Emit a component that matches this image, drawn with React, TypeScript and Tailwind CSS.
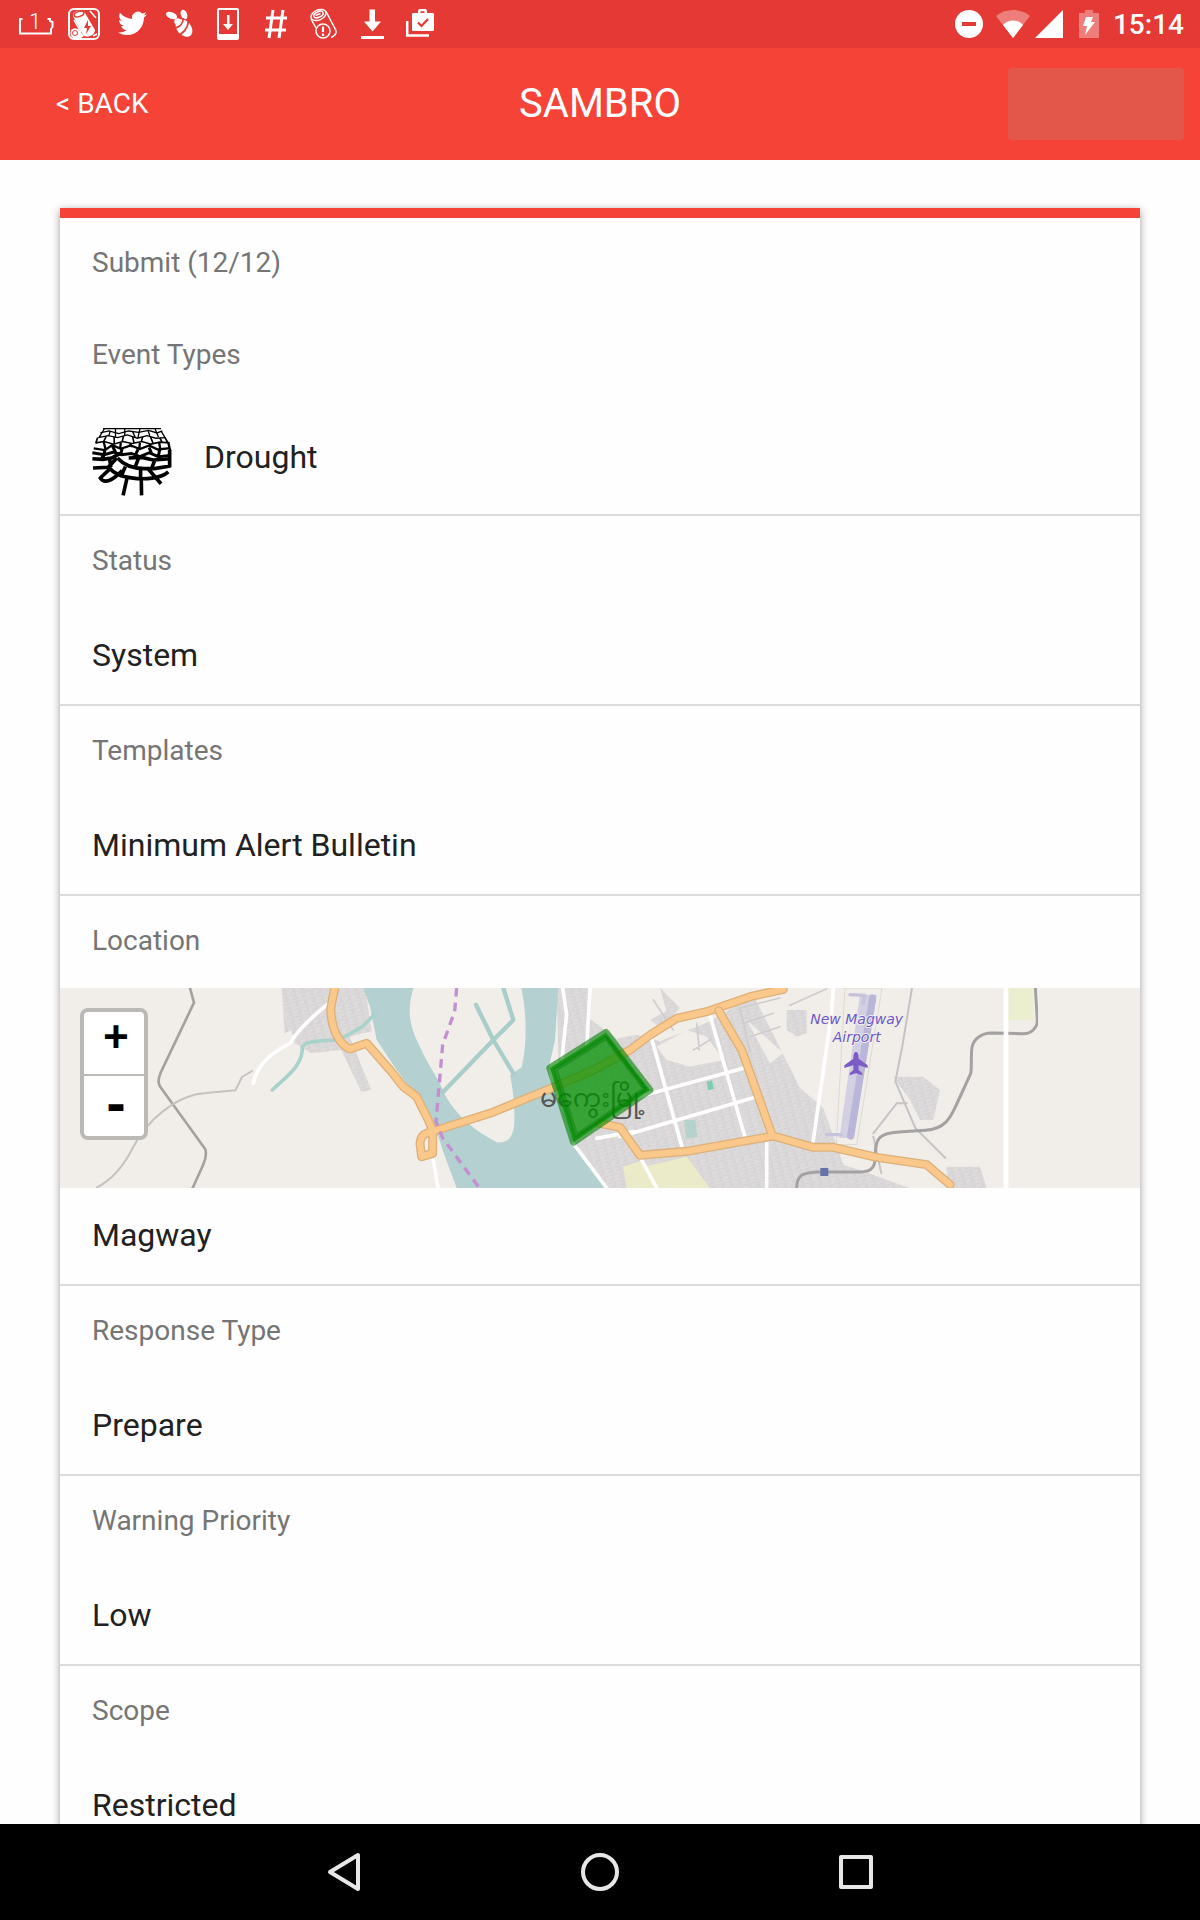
import type { ReactNode } from "react"

const fields = [
  { label: "Response Type", value: "Prepare" },
  { label: "Warning Priority", value: "Low" },
  { label: "Scope", value: "Restricted" },
]

function StatusIcon({ children }: { children: ReactNode }) {
  return (
    <svg viewBox="0 0 48 48" className="size-12 shrink-0" fill="none" aria-hidden="true">
      {children}
    </svg>
  )
}

function StatusBar() {
  return (
    <div className="flex h-12 shrink-0 items-center justify-between bg-[#e53935] pr-4 pl-3 text-white">
      <div className="flex">
        <StatusIcon>
          <path d="M10.500 19H8v14.500h31V29l1.500-2v-5L38 21v-2h-2.500" stroke="#fff" strokeWidth="2" />
          <text x="17" y="29" fontSize="22" fontWeight="300" fill="#fff" fontFamily="Roboto, sans-serif">1</text>
        </StatusIcon>
        <StatusIcon>
          <rect x="9" y="9" width="30" height="30" rx="5" stroke="#fff" strokeWidth="2" />
          <path d="M13 16c-1-5 9-7 12-3l10 17c0 5-8 9-12 5Z" fill="#fff" />
          <ellipse cx="19" cy="14" rx="5" ry="2.500" transform="rotate(-18 19 14)" stroke="#e53935" strokeWidth="1.500" />
          <path d="m28 20-4 8h3l-1 6 5-8h-3Z" fill="#e53935" />
          <path d="M11 30c2-2 6-2 8 0l5 6-3 2h-8c-2-1-3-4-2-8Z" fill="#fff" />
          <circle cx="15" cy="33" r="2.500" stroke="#e53935" />
          <path d="m14 20 7 12M30 11l6 7M33 36l4-2" stroke="#fff" strokeWidth="1.500" />
        </StatusIcon>
        <StatusIcon>
          <path
            transform="translate(10 9) scale(1.200)"
            fill="#fff"
            d="M23.953 4.570a10 10 0 0 1-2.825.775 4.958 4.958 0 0 0 2.163-2.723c-.951.555-2.005.959-3.127 1.184a4.920 4.920 0 0 0-8.384 4.482C7.690 8.095 4.067 6.130 1.640 3.162a4.822 4.822 0 0 0-.666 2.475c0 1.710.870 3.213 2.188 4.096a4.904 4.904 0 0 1-2.228-.616v.060a4.923 4.923 0 0 0 3.946 4.827 4.996 4.996 0 0 1-2.212.085 4.936 4.936 0 0 0 4.604 3.417 9.867 9.867 0 0 1-6.102 2.105c-.390 0-.779-.023-1.170-.067a13.995 13.995 0 0 0 7.557 2.209c9.053 0 13.998-7.496 13.998-13.985 0-.210 0-.420-.015-.630A9.935 9.935 0 0 0 24 4.590Z"
          />
        </StatusIcon>
        <StatusIcon>
          <g fill="#fff">
            <ellipse cx="15.500" cy="15.500" rx="5.800" ry="3.300" transform="rotate(22 15.500 15.500)" />
            <ellipse cx="28" cy="14.500" rx="3.200" ry="5" transform="rotate(-20 28 14.500)" />
            <circle cx="21.500" cy="21.500" r="3.200" />
            <ellipse cx="28" cy="28" rx="7" ry="10" transform="rotate(-42 28 28)" />
          </g>
          <path d="M17 28c6 0 10-4 10.500-10M21 36c6-2 11-8 11.500-15" stroke="#e53935" strokeWidth="1.800" />
        </StatusIcon>
        <StatusIcon>
          <rect x="14" y="9" width="20" height="30" rx="1" stroke="#fff" strokeWidth="2" />
          <path d="M14 34h20v5H14Z" fill="#fff" />
          <path d="M23 15h2.500v9H29l-5 6-5-6h4Z" fill="#fff" />
        </StatusIcon>
        <StatusIcon>
          <path d="m21 10-4 28M31 10l-4 28M14 18h21M13 30h21" stroke="#fff" strokeWidth="3" />
        </StatusIcon>
        <StatusIcon>
          <g stroke="#fff" strokeWidth="1.500">
            <ellipse cx="18.500" cy="15" rx="8" ry="5" transform="rotate(-24 18.500 15)" />
            <ellipse cx="18.500" cy="14.500" rx="5" ry="2.800" transform="rotate(-24 18.500 14.500)" />
            <path d="m15.500 15.500 5-2M11 19l5 9M26 11.500l10 19c1 3-2 6-5 7" />
            <circle cx="23" cy="31" r="7" />
          </g>
          <path d="M23 26.500v5.500M23 33.500V36" stroke="#fff" strokeWidth="2.200" />
        </StatusIcon>
        <StatusIcon>
          <path d="M21.500 9.500h5.500v12h6l-8.500 10-8.500-10h5.500ZM13 36h23v3H13Z" fill="#fff" />
        </StatusIcon>
        <StatusIcon>
          <path
            d="M17 13h5v-1.500c0-2 1-2.500 2-2.500h5c1 0 2 .5 2 2.500V13h5.500c1 0 1.500.5 1.500 1.500v15c0 1-.5 1.500-1.500 1.500h-19c-1 0-1.500-.5-1.500-1.500v-15c0-1 .5-1.500 1-1.500Zm7.500 0h4v-1.800h-4Z"
            fill="#fff"
            fillRule="evenodd"
          />
          <path d="m22 22.500 3.500 3.500 6.500-7" stroke="#e53935" strokeWidth="2.200" />
          <path d="M11.200 21v14.500H33" stroke="#fff" strokeWidth="2.500" />
        </StatusIcon>
      </div>
      <div className="flex items-center">
        <svg viewBox="0 0 28 28" className="mr-3 size-7" aria-hidden="true">
          <circle cx="14" cy="14" r="14" fill="#fff" />
          <path d="M7 12h14v4H7Z" fill="#e53935" />
        </svg>
        <svg viewBox="0 0 36 28" className="mr-1 h-7 w-9" fill="#fff" aria-hidden="true">
          <path d="M18 28 1 6c9-8 25-8 34 0Z" opacity=".35" />
          <path d="M18 28 8 15c5-6 15-6 20 0Z" />
        </svg>
        <svg viewBox="0 0 28 28" className="mr-4 size-7" fill="#fff" aria-hidden="true">
          <path d="M28 0v28H0Z" />
        </svg>
        <svg viewBox="0 0 20 28" className="mr-3.5 h-7 w-5" fill="#fff" aria-hidden="true">
          <path d="M6 0h8v3h6v25H0V3h6Z" opacity=".35" />
          <path d="M7 7h7l-2 5h4L6 25l2-9H4Z" />
        </svg>
        <time className="pt-0.5 text-[28px] leading-8 font-medium">15:14</time>
      </div>
    </div>
  )
}

function Header() {
  return (
    <header className="grid h-28 shrink-0 grid-cols-[1fr_auto_1fr] items-center bg-[#f64337] px-4 text-white">
      <button type="button" className="ml-10 justify-self-start text-[28px] leading-8">
        &lt; BACK
      </button>
      <h1 className="text-[40px] leading-12">SAMBRO</h1>
      <div className="h-18 w-44 justify-self-end rounded-sm bg-[#e3574b]" />
    </header>
  )
}

function Label({ children }: { children: ReactNode }) {
  return <h2 className="px-8 pt-[29px] pb-[31px] text-[28px] leading-8 text-[#757575]">{children}</h2>
}

function Value({ children }: { children: ReactNode }) {
  return (
    <p className="border-b-2 border-[#dcdcdc] px-8 pt-[27px] pb-[29px] text-[32px] leading-10 text-[#212121]">
      {children}
    </p>
  )
}

function DroughtIcon() {
  return (
    <svg viewBox="36 57 240 206" className="h-17 w-20 shrink-0" fill="none" stroke="#000" aria-hidden="true">
      <g strokeWidth="4">
        <path d="M68 59h176M60 72l26-6 30 8 30-8 30 4 30-6 26 8 16-6" />
        <path d="M54 86l30-6 28 6 30-8 30 10 30-8 26 8 30-2M72 60l-16 26M90 66l-4 14M106 60v24M134 60v20M158 68l8 18M180 60l-6 26M204 64l6 16M226 60l10 24M244 66l12 20" />
      </g>
      <g strokeWidth="5">
        <path d="M46 102l26-4 28 8 28-8 28 6 30-6 28 8 26-6 30 2M52 86l-6 18M78 82l-8 16M102 84v20M130 82l-4 18M158 84l4 18M188 84l-4 16M212 84l8 20M240 86l8 16M256 86l10 18" />
      </g>
      <g strokeWidth="7">
        <path d="M40 119l34 5 22-15 26 11 30-10 28 11 28-11 26 12 38-4M70 98l6 24M122 102l-2 18M150 104l6 10M180 102l-2 18M212 106l-6 8M238 100l4 22M266 102l6 24" />
      </g>
      <g strokeWidth="9">
        <path d="M36 132l36 6 28-8 24 8 30-4 26 10 28-12 28 12 36-4M74 124l-4 16M96 110l14 28M126 120l-4 16M174 122l-8 18M208 116l8 20M240 122l-4 20" />
      </g>
      <g strokeWidth="11">
        <path d="M36 150l32 2 26-4 26-14M112 148c20 22 50 32 80 32h32l48-8M146 148l40-2 34 8 52-4M176 148l-10 26M226 152l-10 26M270 124v52" />
        <path d="M38 178l46-2 26-28M70 140l-6 12M88 150l4 26" />
      </g>
      <g strokeWidth="11">
        <path d="M90 180l-32 30M58 206c14 24 40 10 68-20M84 174c18 24 44 30 70 34 40 6 90 2 112-18M136 174l-10 22M182 178v34M206 182l38 44M141 208l-12 53M184 210l1 51" />
      </g>
    </svg>
  )
}

const northRoad =
  "M824 24l-12 62c2 60 24 106 58 121l50-17 70 80 40 50 40 30 35 70 13 32v68l-33 10-5-40q2-24 20-30l190-60 190-78 120-52 110-60 60-45 80-50 90-20 130-45 100-22"
const southRoad = "M1976 92l70 120 50 140 40 112M1620 430l60 12 60 84 140-12 260-46 120 34 60 0 130 30 150 22 70 60"

// Map is drawn at three units per pixel.
function MapDrawing() {
  return (
    <svg
      viewBox="0 24 3240 600"
      preserveAspectRatio="xMidYMid slice"
      className="h-50 w-full"
      fill="none"
      strokeLinecap="round"
      strokeLinejoin="round"
      role="img"
      aria-label="Map of Magway"
    >
      <defs>
        <pattern id="blocks" width="26" height="22" patternUnits="userSpaceOnUse" patternTransform="rotate(-15)">
          <rect width="26" height="22" fill="#dddadb" />
          <path d="M0 4h17v12M22 0v18H8" stroke="#d0cdcf" strokeWidth="2" />
        </pattern>
        <filter id="soften" x="0" y="0" width="100%" height="100%">
          <feGaussianBlur stdDeviation="2" />
        </filter>
      </defs>
      <rect y="24" width="3240" height="600" fill="#f1eeea" />
      <g filter="url(#soften)">
        <g fill="url(#blocks)">
          <path d="M665 24h250l20 130-66 16 65 160-30 6-60-126-90 10-50-30-10-40-20 10Z" />
          <path d="M1490 24h110l20 110 180 50 150-60 130-80 110 220 30 60 70 60 60 170 60 20 220 80-50 20-100-20-20 70-80-80-130-20-70 60v80h-480l-120-120-80-200Z" />
          <path d="M1740 24h60l60 60-60 60-60-50ZM2180 90h60v70l-30 10-30-20ZM2500 290l90 0 50 40-20 90-40 0-30-60ZM2660 560h100l20 64h-120Z" />
          <path d="M2220 520h120v50h-100Z" />
        </g>
        <path d="M1590 24h150v80l-10 60-60 12-80-60ZM1740 24h60l20 70-80 40ZM1790 200l90-50 60 20 50 70-100 20-70-20ZM2060 120l110 100-40 30Z" fill="#f1eeea" />
        <path d="M1750 560l130-30 70 94h-200ZM1690 560l60-20 40 84h-90Z" fill="#ecebc9" />
        <path d="M2844 24h76v96h-76Z" fill="#eceed0" />
        <path d="M1940 305l16-4 6 26-18 4Z" fill="#7fcdb0" />
        <path d="M1872 420h34l6 50-34 6Z" fill="#b5d2cc" />

        {/* river and streams */}
        <path d="M910 24l20 56 20 100 60 90 75 100 40 70 30 90 35 94h450l-80-114-50-110-40-100-5-30 20-90 10-156Z" fill="#b5d0d0" />
        <path d="M1060 24C1040 90 1048 140 1080 200c20 50 60 100 75 145 35 65 95 110 155 142 35 3 50-17 53-57 2-50-5-110-13-145l35-23c15-62 17-152-1-238Z" fill="#f1eeea" />
        <path d="M1330 24l30 96-60 60-150 155M1248 75l52 105 60 100" stroke="#a9cdc9" strokeWidth="13" />
        <path d="M637 330c40-40 90-70 90-125 0-24 60-22 110-25l70-40 40-40" stroke="#a9d2cb" strokeWidth="11" />

        {/* railways and tracks */}
        <path d="M390 24l12 44-100 210c-10 24-8 36 4 50l130 180c6 20-2 36-8 50l-30 66" stroke="#a3a29f" strokeWidth="8" />
        <path d="M108 624c40-20 80-60 110-120 40-80 130-160 220-165l88-8 20-40 30-18" stroke="#c5c3c0" strokeWidth="6" />
        <path d="M2556 24l-30 180-20 100 60 140 90 90M2440 460l70-90 30 0M2440 470l24 110" stroke="#c5c3c6" strokeWidth="6" />
        <path d="M2210 624c0-40 20-46 60-48h130c40 0 46-20 46-50 0-50 10-66 70-70l80-5c60-4 76-40 90-70l46-100c4-20 0-50 4-80 6-26 30-42 60-42l90 2c30 2 46-20 46-40l-6-97" stroke="#a3a1a1" strokeWidth="9" />
        <path d="M2190 76l110-50M2040 84l120-30M2040 84l30 130M1900 210l50-30M1780 60l60 90M1910 130l8 80M2050 130l90-30M2070 170l90-30" stroke="#cfccce" strokeWidth="5" />

        {/* airport */}
        <path d="M2356 24h110l-76 470h-60Z" stroke="#ddd9cf" strokeWidth="3" />
        <path d="M2400 44h50l-70 430h-42Z" fill="#d3d0e4" />
        <path d="M2438 54l-66 414" stroke="#b9b6d9" strokeWidth="22" />
        <path d="M2370 44l45 2-6 24M2300 464l44 0" stroke="#c6c3dd" strokeWidth="10" />

        {/* white streets */}
        <g stroke="#fff" strokeWidth="11">
          <path d="M580 310c10-60 70-100 110-120 30-50 90-100 130-130M1508 24l12 80-14 130M1590 24l-10 180M1776 180l90 320M1950 105l106 370M1700 360l350-95M1680 470l410-120M2120 480v144M2320 24l-6 80-56 390M1540 490l100 134M1120 540l14 84M1610 475l110-20M1740 530l50 94" />
          <path d="M2838 24v600" strokeLinecap="butt" strokeWidth="14" />
        </g>

        {/* main roads */}
        <path d={northRoad} stroke="#ddb079" strokeWidth="27" />
        <path d={northRoad} stroke="#fac88a" strokeWidth="19" />
        <path d={southRoad} stroke="#ddb079" strokeWidth="27" />
        <path d={southRoad} stroke="#fac88a" strokeWidth="19" />

        <path d="M1190 24l-6 70-36 100-20 230 20 50 110 150" stroke="#c48fd0" strokeWidth="10" strokeDasharray="26 18" strokeLinecap="butt" />
        <rect x="2281" y="564" width="24" height="24" fill="#6672a8" />
        <path d="M2388 216c6 0 8 8 8 20l27 20v8l-27-8v14l11 10v6l-19-6-19 6v-6l11-10v-14l-27 8v-8l27-20c0-12 2-20 8-20Z" fill="#7d5cc6" />
      </g>

      <text
        textAnchor="middle"
        fontSize="42"
        fontStyle="italic"
        fontFamily="'DejaVu Sans', sans-serif"
        fill="#6d5ac8"
        stroke="#f1eeea"
        strokeWidth="6"
        paintOrder="stroke"
      >
        <tspan x="2390" y="132">New Magway</tspan>
        <tspan x="2390" y="186">Airport</tspan>
      </text>
      <text x="1440" y="382" fontSize="76" fill="#555" fontFamily="'Noto Sans Myanmar', 'Noto Sans', sans-serif">
        မကွေးမြို့
      </text>
      <path d="M1638 158l131 172-228 156-71-222Z" stroke="#008000" strokeOpacity=".6" strokeWidth="22" fill="none" />
      <path d="M1638 158l131 172-228 156-71-222Z" fill="#009000" fillOpacity=".75" />
      <path d="M1638 174l116 153-205 140-62-198Z" stroke="#007800" strokeOpacity=".4" strokeWidth="12" fill="none" />
    </svg>
  )
}

function LocationMap() {
  return (
    <div className="relative">
      <MapDrawing />
      <div className="absolute top-5 left-5 flex w-17 flex-col overflow-hidden rounded-lg border-4 border-[#bbb9b5] bg-white pl-1 text-black">
        <button type="button" aria-label="Zoom in" className="-ml-1 h-16 border-b-2 border-[#bbb9b5] pb-2 pl-1 font-['Liberation_Mono',monospace] text-[44px] leading-14 font-bold">
          +
        </button>
        <button type="button" aria-label="Zoom out" className="h-15 pb-1 font-['DejaVu_Sans_Mono',monospace] text-[48px] leading-14 font-bold">
          -
        </button>
      </div>
    </div>
  )
}

function NavBar() {
  return (
    <nav className="flex h-24 shrink-0 items-center justify-center gap-52 bg-black">
      <button type="button" aria-label="Back">
        <svg viewBox="0 0 48 48" className="size-12" fill="none" stroke="#e8e6e8" strokeWidth="4" strokeLinejoin="round">
          <path d="M38 7v34L10 24Z" />
        </svg>
      </button>
      <button type="button" aria-label="Home">
        <svg viewBox="0 0 48 48" className="size-12" fill="none" stroke="#e8e6e8" strokeWidth="4">
          <circle cx="24" cy="24" r="17" />
        </svg>
      </button>
      <button type="button" aria-label="Recent apps">
        <svg viewBox="0 0 48 48" className="size-12" fill="none" stroke="#e8e6e8" strokeWidth="4" strokeLinejoin="round">
          <rect x="9" y="9" width="30" height="30" />
        </svg>
      </button>
    </nav>
  )
}

export default function App() {
  return (
    <div className="flex h-screen flex-col bg-[#fefefe] font-[Roboto,sans-serif]">
      <StatusBar />
      <Header />
      <main className="min-h-0 flex-1 overflow-y-auto px-15 pt-12 [scrollbar-width:none]">
        <section className="border-t-10 border-[#f64337] bg-[#fefefe] shadow-[0_2px_8px_rgba(0,0,0,0.4)]">
          <Label>Submit (12/12)</Label>
          <Label>Event Types</Label>
          <div className="flex items-center gap-8 border-b-2 border-[#dcdcdc] px-8 pt-[26px] pb-[18px] text-[32px] leading-10 text-[#212121]">
            <DroughtIcon />
            <p className="mb-2.5">Drought</p>
          </div>
          <Label>Status</Label>
          <Value>System</Value>
          <Label>Templates</Label>
          <Value>Minimum Alert Bulletin</Value>
          <Label>Location</Label>
          <LocationMap />
          <Value>Magway</Value>
          {fields.map((field) => (
            <div key={field.label}>
              <Label>{field.label}</Label>
              <Value>{field.value}</Value>
            </div>
          ))}
        </section>
      </main>
      <NavBar />
    </div>
  )
}
